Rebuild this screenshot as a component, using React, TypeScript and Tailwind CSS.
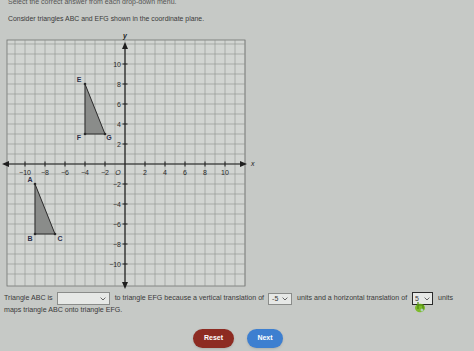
import React from 'react';

const ox = 125;
const oy = 134;
const sx = (u: number) => ox + u * 10;
const sy = (v: number) => oy - v * 10;

const xs = Array.from({ length: 24 }, (_, i) => i - 11);
const ys = Array.from({ length: 24 }, (_, i) => i - 11);
const ticks = [-10, -8, -6, -4, -2, 2, 4, 6, 8, 10];

const Plane: React.FC = () => (
  <svg width="256" height="260" viewBox="0 0 256 260" className="block">
    <rect x="7" y="10" width="238" height="246" fill="#d2d5d2" stroke="#707370" strokeWidth="0.8" />
    {xs.map((u) => (
      <line key={`v${u}`} x1={sx(u)} y1="10" x2={sx(u)} y2="256" stroke="#8d908d" strokeWidth="0.6" />
    ))}
    {ys.map((v) => (
      <line key={`h${v}`} x1="7" y1={sy(v)} x2="245" y2={sy(v)} stroke="#8d908d" strokeWidth="0.6" />
    ))}

    {/* axes */}
    <line x1="5" y1={oy} x2="243" y2={oy} stroke="#1e1e1e" strokeWidth="1.2" />
    <polygon points={`2,${oy} 9,${oy - 3} 9,${oy + 3}`} fill="#1e1e1e" />
    <polygon points={`247,${oy} 240,${oy - 3} 240,${oy + 3}`} fill="#1e1e1e" />
    <line x1={ox} y1="15" x2={ox} y2="255" stroke="#1e1e1e" strokeWidth="1.2" />
    <polygon points={`${ox},12 ${ox - 3},19 ${ox + 3},19`} fill="#1e1e1e" />
    <polygon points={`${ox},259 ${ox - 3},252 ${ox + 3},252`} fill="#1e1e1e" />
    <text x="251" y={oy + 2} fontSize="7" fontStyle="italic" fill="#222">x</text>
    <text x={ox - 2} y="8" fontSize="7" fontStyle="italic" fontWeight="bold" fill="#222">y</text>

    {ticks.map((t) => (
      <g key={`t${t}`}>
        <line x1={sx(t)} y1={oy - 2.5} x2={sx(t)} y2={oy + 2.5} stroke="#1e1e1e" strokeWidth="1" />
        <text x={sx(t)} y={oy + 11} fontSize="7" textAnchor="middle" fill="#2a2a2a">
          {t < 0 ? `\u2212${-t}` : t}
        </text>
        <line x1={ox - 2.5} y1={sy(t)} x2={ox + 2.5} y2={sy(t)} stroke="#1e1e1e" strokeWidth="1" />
        <text x={ox - 4} y={sy(t) + 2.5} fontSize="7" textAnchor="end" fill="#2a2a2a">
          {t < 0 ? `\u2212${-t}` : t}
        </text>
      </g>
    ))}
    <text x={ox - 7} y={oy + 11} fontSize="7" fontStyle="italic" textAnchor="middle" fill="#2a2a2a">O</text>

    {/* triangle EFG */}
    <polygon points={`${sx(-4)},${sy(8)} ${sx(-4)},${sy(3)} ${sx(-2)},${sy(3)}`} fill="#8a8c8a" stroke="#2a2a2a" strokeWidth="1" />
    {[[-4, 8], [-4, 3], [-2, 3]].map(([u, v]) => (
      <circle key={`p${u}${v}`} cx={sx(u)} cy={sy(v)} r="1.3" fill="#2a2a2a" />
    ))}
    <text x={sx(-4) - 6} y={sy(8) - 2} fontSize="7" fontWeight="bold" fill="#2b2f4a" textAnchor="middle">E</text>
    <text x={sx(-4) - 6} y={sy(3) + 6} fontSize="7" fontWeight="bold" fill="#2b2f4a" textAnchor="middle">F</text>
    <text x={sx(-2) + 4} y={sy(3) + 6} fontSize="7" fontWeight="bold" fill="#2b2f4a" textAnchor="middle">G</text>

    {/* triangle ABC */}
    <polygon points={`${sx(-9)},${sy(-2)} ${sx(-9)},${sy(-7)} ${sx(-7)},${sy(-7)}`} fill="#8a8c8a" stroke="#2a2a2a" strokeWidth="1" />
    {[[-9, -2], [-9, -7], [-7, -7]].map(([u, v]) => (
      <circle key={`q${u}${v}`} cx={sx(u)} cy={sy(v)} r="1.3" fill="#2a2a2a" />
    ))}
    <text x={sx(-9) - 5} y={sy(-2) - 2} fontSize="7" fontWeight="bold" fill="#2b2f4a" textAnchor="middle">A</text>
    <text x={sx(-9) - 5} y={sy(-7) + 7} fontSize="7" fontWeight="bold" fill="#2b2f4a" textAnchor="middle">B</text>
    <text x={sx(-7) + 5} y={sy(-7) + 7} fontSize="7" fontWeight="bold" fill="#2b2f4a" textAnchor="middle">C</text>
  </svg>
);

const Chevron: React.FC = () => (
  <svg width="6" height="4" viewBox="0 0 6 4" className="shrink-0">
    <path d="M0.6 0.6 L3 3 L5.4 0.6" fill="none" stroke="#555" strokeWidth="0.9" />
  </svg>
);

export default function App() {
  return (
    <div
      className="w-[474px] h-[351px] overflow-hidden bg-[#c6c9c6] text-[#2e2e2e]"
      style={{ fontFamily: '"Liberation Sans", Arial, sans-serif' }}
    >
      <div className="h-[6px] overflow-hidden px-[8px]">
        <p className="-mt-[3px] text-[7px] leading-[9px] text-[#555]">Select the correct answer from each drop-down menu.</p>
      </div>
      <p className="mt-[8px] px-[8px] text-[6.9px] leading-[9px] text-[#3a3a3a]">
        Consider triangles ABC and EFG shown in the coordinate plane.
      </p>

      <div className="mt-[7px]">
        <Plane />
      </div>

      <div className="mt-[2px] flex h-[13px] items-center pl-[4px] text-[7.1px] leading-[9px] text-[#3a3a3a] whitespace-nowrap">
        <span>Triangle ABC is</span>
        <div className="ml-[4px] flex h-[13px] w-[53px] items-center justify-end border border-[#8a8c8a] bg-[#e6e8e6] pr-[3px]">
          <Chevron />
        </div>
        <span className="ml-[5px]">to triangle EFG because a vertical translation of</span>
        <div className="ml-[4px] flex h-[12px] w-[24px] items-center justify-between border border-[#8a8c8a] bg-[#e6e8e6] px-[3px]">
          <span className="text-[7px]">-5</span>
          <Chevron />
        </div>
        <span className="ml-[5px]">units and a horizontal translation of</span>
        <div className="relative ml-[5px] flex h-[13px] w-[21px] items-center justify-between border-[1.5px] border-[#2a2a2a] bg-[#e6e8e6] px-[2px]">
          <span className="text-[7px]">5</span>
          <Chevron />
          <svg width="14" height="12" viewBox="0 0 14 12" className="absolute left-[1px] top-[8px]">
            <ellipse cx="6" cy="7" rx="5" ry="4.2" fill="#7dbb2b" />
            <path d="M4 1 L4 8 M4 4 L9 4 L9 9" stroke="#4f8a12" strokeWidth="1.2" fill="none" />
            <circle cx="8" cy="9" r="1.5" fill="#c6d8ff" opacity="0.7" />
          </svg>
        </div>
        <span className="ml-[5px]">units</span>
      </div>
      <p className="mt-[1px] pl-[4px] text-[7.1px] leading-[9px] text-[#3a3a3a]">maps triangle ABC onto triangle EFG.</p>

      <div className="mt-[14px] flex justify-center gap-[13px] pl-[2px]">
        <button className="flex h-[19px] w-[41px] items-center justify-center rounded-full bg-[#8d2b22] text-[7px] font-bold text-white shadow-sm">
          Reset
        </button>
        <button className="flex h-[19px] w-[36px] items-center justify-center rounded-full bg-[#3d7fd0] text-[7px] font-bold text-white shadow-sm">
          Next
        </button>
      </div>
    </div>
  );
}
